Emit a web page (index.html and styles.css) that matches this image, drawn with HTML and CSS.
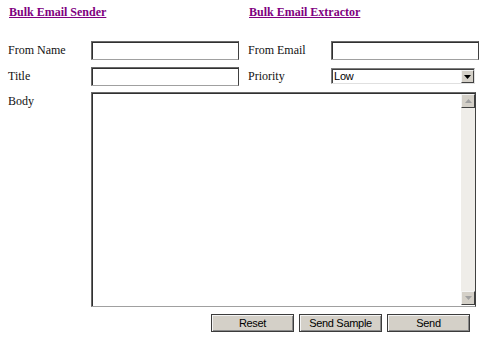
FILE: index.html
```html
<!DOCTYPE html>
<html>
<head>
<meta charset="utf-8">
<title>Bulk Email Sender</title>
<link rel="stylesheet" href="styles.css">
</head>
<body>
<div class="page">
  <div class="heads">
    <a class="head" href="#">Bulk Email Sender</a>
    <a class="head" href="#">Bulk Email Extractor</a>
  </div>
  <div class="row row1">
    <label class="lbl">From Name</label>
    <input class="txt" type="text">
    <span class="sp"></span>
    <label class="lbl">From Email</label>
    <input class="txt" type="text">
  </div>
  <div class="row row2">
    <label class="lbl">Title</label>
    <input class="txt" type="text">
    <span class="sp"></span>
    <label class="lbl">Priority</label>
    <div class="sel">
      <select class="sel-in"><option>Low</option><option>Normal</option><option>High</option></select>
      <span class="dd">
        <svg width="7" height="4" viewBox="0 0 7 4"><path d="M0 0h7L3.5 4z" fill="#000"/></svg>
      </span>
    </div>
  </div>
  <div class="row row3">
    <label class="lbl lbl-top">Body</label>
    <div class="body-box">
      <textarea class="ta"></textarea>
      <div class="sb">
        <span class="sb-btn"><svg width="7" height="4" viewBox="0 0 7 4"><path d="M3.5 0L7 4H0z" fill="#a0a0a0"/></svg></span>
        <span class="sb-track"></span>
        <span class="sb-btn"><svg width="7" height="4" viewBox="0 0 7 4"><path d="M0 0h7L3.5 4z" fill="#a0a0a0"/></svg></span>
      </div>
    </div>
  </div>
  <div class="btns">
    <button class="btn" type="button">Reset</button>
    <button class="btn" type="button">Send Sample</button>
    <button class="btn" type="button">Send</button>
  </div>
</div>
</body>
</html>
```

FILE: styles.css
```css
html, body {
  margin: 0;
  padding: 0;
  background: #fff;
}
body {
  font-family: "Liberation Serif", "Times New Roman", serif;
  font-size: 12px;
  color: #000;
}
.page {
  padding: 5px 8px 0 8px;
  width: 484px;
}
.heads {
  display: flex;
  line-height: 14px;
  height: 14px;
}
.head {
  box-sizing: border-box;
  width: 240px;
  padding-left: 1px;
  color: #800080;
  font-weight: bold;
  text-decoration: underline;
}
.row {
  display: flex;
  align-items: flex-start;
  height: 19px;
}
.row1 { margin-top: 22px; }
.row2 { margin-top: 7px; }
.row3 { margin-top: 6px; height: 215px; }
.lbl {
  width: 83px;
  line-height: 19px;
  flex: none;
  color: #111;
}
.sp { width: 9px; flex: none; }
.txt {
  box-sizing: border-box;
  width: 148px;
  height: 19px;
  margin: 0;
  padding: 0 2px;
  border: 1px solid;
  border-color: #6a6a6a #404040 #a0a0a0 #6a6a6a;
  box-shadow: inset 1px 1px 0 #303030;
  background: #fff;
  font-family: "Liberation Sans", Arial, sans-serif;
  font-size: 11px;
  outline: none;
}
.sel {
  box-sizing: border-box;
  width: 144px;
  height: 16px;
  margin-top: 1px;
  display: flex;
  border: 1px solid;
  border-color: #808080 #e0e0e0 #e0e0e0 #808080;
  box-shadow: inset 1px 1px 0 #404040;
  background: #fff;
}
.sel-in {
  flex: 1;
  appearance: none;
  -webkit-appearance: none;
  border: 0;
  margin: 0;
  padding: 0 0 0 2px;
  background: transparent;
  font-family: "Liberation Sans", Arial, sans-serif;
  font-size: 11px;
  letter-spacing: -0.2px;
  color: #000;
  height: 14px;
  line-height: 14px;
  outline: none;
}
.dd {
  box-sizing: border-box;
  width: 13px;
  height: 13px;
  margin: 1px 0 0 0;
  display: flex;
  align-items: center;
  justify-content: center;
  background: #d4d0c8;
  border: 1px solid;
  border-color: #f4f4f4 #404040 #404040 #f4f4f4;
}
.body-box {
  box-sizing: border-box;
  width: 385px;
  height: 215px;
  display: flex;
  border: 1px solid;
  border-color: #6a6a6a #404040 #a0a0a0 #6a6a6a;
  box-shadow: inset 1px 1px 0 #303030;
  background: #fff;
}
.ta {
  flex: 1;
  border: 0;
  margin: 1px 0 0 1px;
  padding: 2px;
  resize: none;
  outline: none;
  font-family: "Liberation Sans", Arial, sans-serif;
  font-size: 11px;
  overflow: hidden;
}
.sb {
  width: 14px;
  display: flex;
  flex-direction: column;
  margin: 1px 0 1px 0;
}
.sb-btn {
  box-sizing: border-box;
  height: 14px;
  display: flex;
  align-items: center;
  justify-content: center;
  background: #d4d0c8;
  border: 1px solid;
  border-color: #f4f4f4 #404040 #404040 #f4f4f4;
}
.sb-track {
  flex: 1;
  background: #efede9;
}
.btns {
  display: flex;
  gap: 5px;
  margin-top: 7px;
  padding-left: 203px;
}
.btn {
  box-sizing: border-box;
  width: 83px;
  height: 18px;
  margin: 0;
  padding: 0;
  background: #d4d0c8;
  border: 1px solid #3c3c3c;
  box-shadow: inset 1px 1px 0 #f4f4f4, inset -1px -1px 0 #8a8a8a;
  font-family: "Liberation Sans", Arial, sans-serif;
  font-size: 11px;
  letter-spacing: -0.3px;
  color: #000;
  line-height: 14px;
}
```
